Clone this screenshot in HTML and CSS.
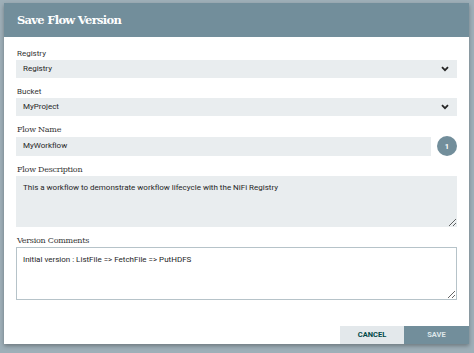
FILE: index.html
```html
<!DOCTYPE html>
<html>
<head>
<meta charset="utf-8">
<link rel="stylesheet" href="styles.css">
</head>
<body>
<div class="dialog">
  <div class="header">Save Flow Version</div>
  <div class="body">
    <div class="group">
      <div class="label sans">Registry</div>
      <div class="select"><span>Registry</span>
        <svg class="chev" width="8" height="6" viewBox="0 0 8 6"><polyline points="1,1.2 4,4.2 7,1.2" fill="none" stroke="#262626" stroke-width="1.8"/></svg>
      </div>
    </div>
    <div class="group">
      <div class="label sans">Bucket</div>
      <div class="select"><span>MyProject</span>
        <svg class="chev" width="8" height="6" viewBox="0 0 8 6"><polyline points="1,1.2 4,4.2 7,1.2" fill="none" stroke="#262626" stroke-width="1.8"/></svg>
      </div>
    </div>
    <div class="group">
      <div class="label">Flow Name</div>
      <div class="name-row">
        <div class="input">MyWorkflow</div>
        <div class="badge">1</div>
      </div>
    </div>
    <div class="group">
      <div class="label">Flow Description</div>
      <textarea class="area desc">This a workflow to demonstrate workflow lifecycle with the NiFi Registry</textarea>
    </div>
    <div class="group">
      <div class="label">Version Comments</div>
      <textarea class="area comments">Initial version : ListFile =&gt; FetchFile =&gt; PutHDFS</textarea>
    </div>
  </div>
  <div class="footer">
    <div class="btn cancel">CANCEL</div>
    <div class="btn save">SAVE</div>
  </div>
</div>
</body>
</html>
```
FILE: styles.css
```css
html, body {
  margin: 0;
  padding: 0;
}
body {
  width: 474px;
  height: 353px;
  background: #9eafb8;
  overflow: hidden;
  font-family: Roboto, "Liberation Sans", sans-serif;
  color: #262626;
}
.dialog {
  margin: 3px 0 0 4px;
  width: 465px;
  height: 341px;
  background: #ffffff;
  box-shadow: 0 2px 4px rgba(0, 0, 0, 0.3);
  display: flex;
  flex-direction: column;
}
.header {
  height: 34px;
  background: #728e9b;
  color: #ffffff;
  font-family: "DejaVu Serif", "Liberation Serif", serif;
  font-weight: bold;
  font-size: 11.5px;
  letter-spacing: -0.7px;
  line-height: 34px;
  padding-left: 13px;
  box-sizing: border-box;
}
.body {
  flex: 1;
  padding: 12px 12px 0 12px;
  display: flex;
  flex-direction: column;
  gap: 9px;
}
.group {
  display: flex;
  flex-direction: column;
}
.label {
  font-family: "DejaVu Serif", "Liberation Serif", serif;
  font-size: 8px;
  letter-spacing: -0.25px;
  line-height: 10px;
  height: 10px;
  margin-bottom: 1px;
  padding-left: 1px;
  color: #333333;
}
.label.sans {
  font-family: Roboto, "Liberation Sans", sans-serif;
  font-size: 8px;
  letter-spacing: 0;
}
.select, .input {
  height: 18px;
  background: #e9edef;
  font-size: 8px;
  line-height: 18px;
  padding-left: 7px;
  padding-right: 8px;
  display: flex;
  align-items: center;
  justify-content: space-between;
}
.name-row {
  display: flex;
  align-items: center;
  gap: 6px;
}
.input {
  flex: 1;
  height: 19px;
}
.badge {
  width: 20px;
  height: 20px;
  border-radius: 50%;
  background: #728e9b;
  color: #ffffff;
  font-size: 7.5px;
  font-weight: bold;
  display: flex;
  align-items: center;
  justify-content: center;
}
.area {
  display: block;
  box-sizing: border-box;
  width: 100%;
  margin: 0;
  font-family: Roboto, "Liberation Sans", sans-serif;
  font-size: 8px;
  line-height: 11px;
  color: #262626;
  resize: vertical;
  outline: none;
}
.desc {
  height: 51px;
  background: #e9edef;
  border: none;
  padding: 6px 7px;
}
.comments {
  height: 53px;
  background: #ffffff;
  border: 1px solid #b6c3c9;
  padding: 6px 6px;
}
.footer {
  display: flex;
  justify-content: flex-end;
  height: 18px;
}
.btn {
  width: 65px;
  height: 18px;
  font-size: 7.5px;
  font-weight: bold;
  line-height: 18px;
  text-align: center;
}
.cancel {
  width: 64px;
  background: #e3e8eb;
  color: #004849;
}
.save {
  background: #728e9b;
  color: #dfe7ea;
}
```
